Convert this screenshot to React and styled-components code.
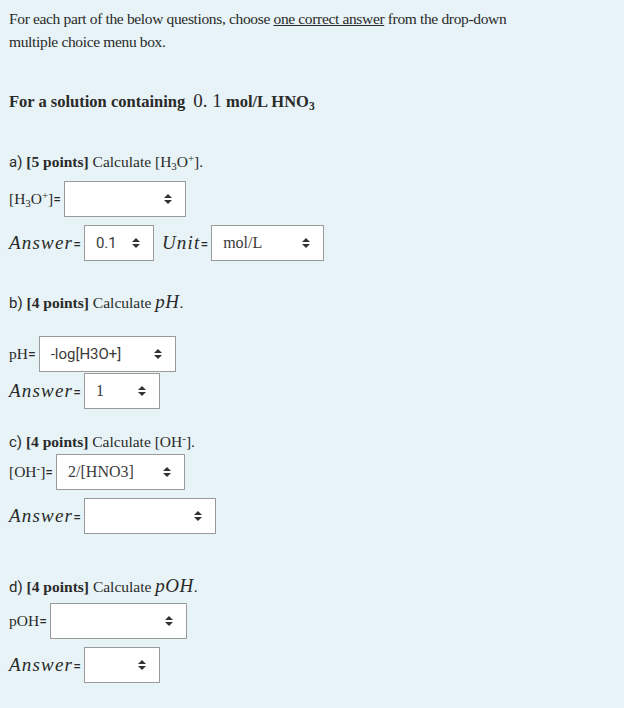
import React from 'react'
import styled, { createGlobalStyle } from 'styled-components'

const GlobalStyle = createGlobalStyle`
  html, body {
    margin: 0;
    padding: 0;
    background: #e7f3f6;
  }
  body {
    font-family: 'Liberation Serif', serif;
    color: #2a2a2a;
  }
`

const Page = styled.div`
  width: 624px;
  height: 708px;
  box-sizing: border-box;
  padding: 7px 9px 0;
  background: #e7f3f6;
  overflow: hidden;
`

const Intro = styled.p`
  margin: 0;
  max-width: 545px;
  font-size: 15.5px;
  letter-spacing: -0.35px;
  line-height: 23px;
`

const Underlined = styled.span`
  text-decoration: underline;
`

const Heading = styled.div`
  margin-top: 37px;
  height: 23px;
  font-size: 16.5px;
  line-height: 23px;
  font-weight: bold;
  .num {
    font-weight: normal;
    font-size: 19px;
    line-height: 1;
    margin-left: 4px;
  }
`

const Title = styled.div`
  margin-top: ${({ $top }) => $top}px;
  height: 23px;
  font-size: 15.5px;
  line-height: 23px;
  .letter {
    font-family: Roboto, 'Liberation Sans', sans-serif;
    font-size: 15px;
  }
  b {
    font-weight: bold;
  }
`

const Row = styled.div`
  display: flex;
  align-items: center;
  height: 36px;
  margin-top: ${({ $top }) => $top}px;
  font-size: 15.5px;
`

const Label = styled.span`
  margin-right: 3px;
  margin-left: ${({ $left }) => $left || 0}px;
  white-space: nowrap;
`

const MathVar = styled.i`
  font-family: 'Liberation Serif', serif;
  font-size: 19px;
  line-height: 1;
  letter-spacing: ${({ $spread }) => ($spread ? '1.2px' : '0.5px')};
`

const Eq = styled.span`
  font-family: Roboto, 'Liberation Sans', sans-serif;
  font-size: 14px;
`

const Box = styled.div`
  position: relative;
  box-sizing: border-box;
  width: ${({ $w }) => $w}px;
  height: 36px;
  background: #fff;
  border: 1px solid #9a9a9a;
  display: flex;
  align-items: center;
  padding-left: 11px;
  color: #3a3a3a;
  font-size: ${({ $sans }) => ($sans ? '15px' : '16px')};
  font-family: ${({ $sans }) =>
    $sans ? "Roboto, 'Liberation Sans', sans-serif" : "'Liberation Serif', serif"};
`

const Arrow = styled.svg`
  position: absolute;
  right: 13px;
  top: 50%;
  margin-top: -5px;
`

const Sub = styled.sub`
  font-size: 0.7em;
  vertical-align: -0.25em;
  line-height: 0;
`

const Sup = styled.sup`
  font-size: 0.7em;
  vertical-align: 0.5em;
  line-height: 0;
`

const Dropdown = ({ w, value, sans }) => (
  <Box $w={w} $sans={sans}>
    {value}
    <Arrow width="8" height="10" viewBox="0 0 8 10">
      <path d="M4 0 L8 4 L0 4 Z M0 6 L8 6 L4 10 Z" fill="#333" />
    </Arrow>
  </Box>
)

const H3O = () => (
  <>
    [H<Sub>3</Sub>O<Sup>+</Sup>]
  </>
)

const OH = () => (
  <>
    [OH<Sup>-</Sup>]
  </>
)

const AnswerLabel = () => (
  <Label>
    <MathVar $spread>Answer</MathVar>
    <Eq>=</Eq>
  </Label>
)

export default function App() {
  return (
    <Page>
      <GlobalStyle />
      <Intro>
        For each part of the below questions, choose <Underlined>one correct answer</Underlined> from the drop-down
        multiple choice menu box.
      </Intro>

      <Heading>
        For a solution containing <span className="num">0. 1</span> mol/L HNO<Sub>3</Sub>
      </Heading>

      <Title $top={37}>
        <span className="letter">a)</span> <b>[5 points]</b> Calculate <H3O />.
      </Title>
      <Row $top={8}>
        <Label>
          <H3O />
          <Eq>=</Eq>
        </Label>
        <Dropdown w={122} value="" />
      </Row>
      <Row $top={8}>
        <AnswerLabel />
        <Dropdown w={70} value="0.1" sans />
        <Label $left={8}>
          <MathVar $spread>Unit</MathVar>
          <Eq>=</Eq>
        </Label>
        <Dropdown w={113} value="mol/L" />
      </Row>

      <Title $top={30}>
        <span className="letter">b)</span> <b>[4 points]</b> Calculate <MathVar>pH</MathVar>.
      </Title>
      <Row $top={22}>
        <Label>
          pH<Eq>=</Eq>
        </Label>
        <Dropdown w={137} value="-log[H3O+]" sans />
      </Row>
      <Row $top={1}>
        <AnswerLabel />
        <Dropdown w={76} value="1" />
      </Row>

      <Title $top={21}>
        <span className="letter">c)</span> <b>[4 points]</b> Calculate <OH />.
      </Title>
      <Row $top={1}>
        <Label>
          <OH />
          <Eq>=</Eq>
        </Label>
        <Dropdown w={129} value="2/[HNO3]" />
      </Row>
      <Row $top={8}>
        <AnswerLabel />
        <Dropdown w={132} value="" />
      </Row>

      <Title $top={41}>
        <span className="letter">d)</span> <b>[4 points]</b> Calculate <MathVar>pOH</MathVar>.
      </Title>
      <Row $top={5}>
        <Label>
          pOH<Eq>=</Eq>
        </Label>
        <Dropdown w={137} value="" />
      </Row>
      <Row $top={8}>
        <AnswerLabel />
        <Dropdown w={76} value="" />
      </Row>
    </Page>
  )
}
